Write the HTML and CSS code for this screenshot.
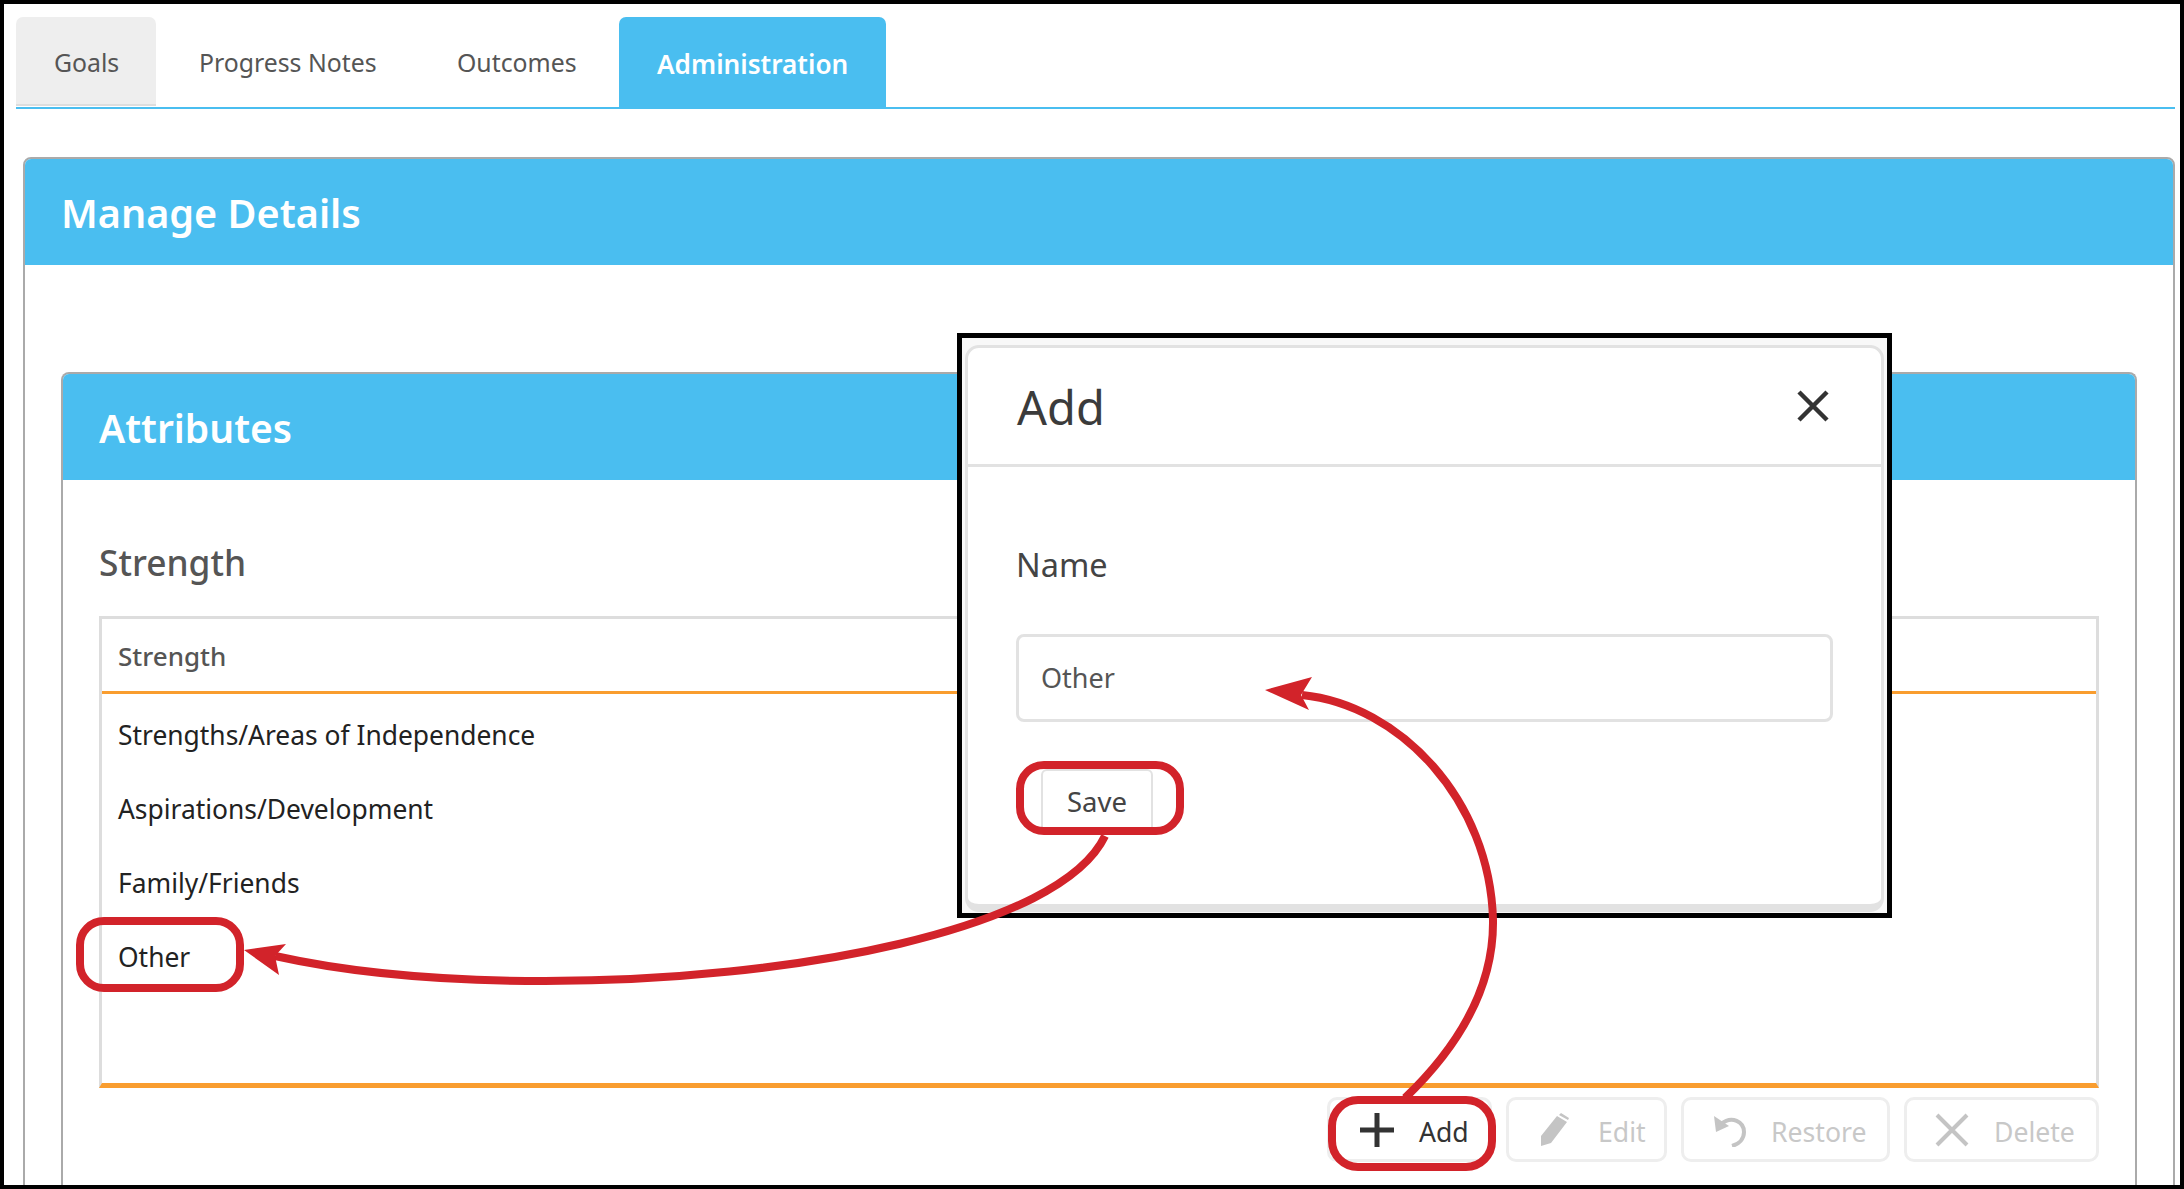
FILE: index.html
```html
<!DOCTYPE html>
<html lang="en">
<head>
    <meta charset="UTF-8">
    <title>Manage Details</title>
    <link rel="stylesheet" href="styles.css">
</head>
<body>
    <div class="frame">
        <nav class="tabs">
            <a class="tab tab-goals">Goals</a>
            <a class="tab tab-progress">Progress Notes</a>
            <a class="tab tab-outcomes">Outcomes</a>
            <a class="tab tab-admin">Administration</a>
        </nav>

        <section class="panel panel-outer">
            <h1 class="panel-title panel-title-main">Manage Details</h1>
            <div class="panel-body">
                <section class="panel panel-inner">
                    <h2 class="panel-title">Attributes</h2>
                    <div class="attr-body">
                        <h3 class="attr-heading">Strength</h3>
                        <div class="grid">
                            <div class="grid-head">Strength</div>
                            <ul class="grid-rows">
                                <li>Strengths/Areas of Independence</li>
                                <li>Aspirations/Development</li>
                                <li>Family/Friends</li>
                                <li>Other</li>
                            </ul>
                        </div>
                        <div class="toolbar">
                            <button class="tool tool-add">
                                <svg class="tool-icon" viewBox="0 0 34 34"><path d="M17 0v34M0 17h34" fill="none" stroke="#333" stroke-width="5"/></svg>
                                Add
                            </button>
                            <button class="tool tool-edit" disabled>
                                <svg class="tool-icon" viewBox="0 0 34 34"><path d="M2 33V23L18 3l10 6-16 21zM22 0l8 5-1 2-9-5z" fill="#c4c4c4"/></svg>
                                Edit
                            </button>
                            <button class="tool tool-restore" disabled>
                                <svg class="tool-icon" viewBox="0 0 34 34"><path d="M9 11C20 2 32 9 32 19c0 7-5 12-12 14" fill="none" stroke="#c4c4c4" stroke-width="4"/><path d="M2 3l2 16 13-6z" fill="#c4c4c4"/></svg>
                                Restore
                            </button>
                            <button class="tool tool-delete" disabled>
                                <svg class="tool-icon" viewBox="0 0 34 34"><path d="M2 2l30 30M32 2L2 32" fill="none" stroke="#c4c4c4" stroke-width="4"/></svg>
                                Delete
                            </button>
                        </div>
                    </div>
                </section>
            </div>
        </section>

        <div class="dialog-crop">
            <div class="dialog">
                <header class="dialog-head">
                    <h4 class="dialog-title">Add</h4>
                    <svg class="dialog-close" viewBox="0 0 32 32"><path d="M2 2l28 28M30 2L2 30" fill="none" stroke="#333" stroke-width="4.5"/></svg>
                </header>
                <div class="dialog-body">
                    <label class="field-label">Name</label>
                    <div class="field-input">Other</div>
                    <button class="save-btn">Save</button>
                </div>
            </div>
        </div>

        <!-- callouts drawn over the screenshot -->
        <svg class="callouts" viewBox="0 0 2184 1189">
            <g fill="none" stroke="#d2232a" stroke-width="8">
                <rect x="80" y="921" width="160" height="67" rx="24"/>
                <rect x="1020" y="765" width="160" height="66" rx="24"/>
                <rect x="1332" y="1100" width="160" height="67" rx="26"/>
                <path d="M275 956C360 975 460 981 545 981C790 981 1060 930 1105 836"/>
                <path d="M1302 695C1400 705 1490 800 1493 920C1494 990 1455 1050 1405 1098"/>
            </g>
            <path d="M244 950L286 944L275 956L279 975Z" fill="#d2232a"/>
            <path d="M1265 690L1312 677L1301 695L1309 710Z" fill="#d2232a"/>
        </svg>
    </div>
</body>
</html>
```

FILE: styles.css
```css
* { margin: 0; padding: 0; box-sizing: border-box; }

body {
    font-family: 'Noto Sans', 'Open Sans', sans-serif;
    background: #000;
    overflow: hidden;
}

.frame {
    position: relative;
    width: 2184px;
    height: 1189px;
    overflow: hidden;
    background: #fff;
    border: 4px solid #000;
    padding: 13px 5px 0 12px;
}

/* Tabs */
.tabs {
    display: flex;
    border-bottom: 2px solid #4abef0;
    height: 92px;
}

.tab {
    display: block;
    height: 90px;
    font-size: 24.8px;
    white-space: nowrap;
    color: #555;
    padding-top: 28px;
    border-radius: 7px 7px 0 0;
}

.tab-goals {
    width: 140px;
    padding-left: 38px;
    background: #eee;
    border-bottom: 2px solid #ddd;
    height: 89px;
}

.tab-progress { width: 260px; padding-left: 43px; }
.tab-outcomes { width: 203px; padding-left: 41px; }

.tab-admin {
    width: 267px;
    padding-left: 38px;
    padding-top: 29px;
    background: #4abef0;
    color: #fff;
    font-size: 26.2px;
    font-weight: 600;
}

/* Panels */
.panel {
    border: 2px solid #aaa;
    border-radius: 8px 8px 0 0;
}

.panel-outer {
    margin: 48px 0 0 7px;
    width: 2152px;
    height: 1100px;
}

.panel-title {
    background: #4abef0;
    color: #fff;
    font-weight: 600;
    font-size: 39px;
    height: 106px;
    padding: 27px 0 0 36px;
    line-height: 54px;
    border-radius: 6px 6px 0 0;
}

.panel-title-main { font-size: 39.6px; }

.panel-body { padding: 107px 36px 0 36px; }

.panel-inner {
    height: 900px;
    border-bottom: 0;
}

.attr-body { padding: 0 36px; }

.attr-heading {
    font-size: 35.3px;
    font-weight: 500;
    color: #555;
    padding-top: 57px;
    line-height: 50px;
    height: 136px;
}

/* Table */
.grid {
    height: 472px;
    border: solid #ddd;
    border-width: 3px 3px 0 3px;
    border-bottom: 5px solid #f99d2f;
}

.grid-head {
    height: 75px;
    padding: 19px 0 0 16px;
    font-size: 26px;
    font-weight: 500;
    color: #555;
    border-bottom: 3px solid #f99d2f;
}

.grid-rows {
    list-style: none;
    padding: 4px 0 0 16px;
}

.grid-rows li {
    height: 74px;
    line-height: 74px;
    font-size: 26.4px;
    color: #222;
}

/* Toolbar */
.toolbar {
    display: flex;
    justify-content: flex-end;
    gap: 14px;
    margin-top: 9px;
}

.tool {
    display: flex;
    align-items: center;
    height: 65px;
    background: #fff;
    border: 3px solid #eee;
    border-radius: 10px;
    font: inherit;
    font-size: 26.6px;
    color: #c8c8c8;
    padding: 4px 0 0 28px;
}

.tool-add { width: 165px; color: #333; padding-left: 30px; }
.tool-edit { width: 161px; padding-left: 30px; }
.tool-restore { width: 209px; }
.tool-delete { width: 195px; }

.tool-icon {
    width: 34px;
    height: 34px;
    margin: -4px 25px 0 0;
}

/* Dialog, as pasted over the page */
.dialog-crop {
    position: absolute;
    left: 953px;
    top: 329px;
    width: 935px;
    height: 585px;
    background: #f8f8f8;
    border: 5px solid #000;
    padding: 7px 3px 0 3px;
}

.dialog {
    height: 567px;
    background: #fff;
    border: 3px solid #e2e2e2;
    border-bottom-width: 8px;
    border-radius: 14px;
}

.dialog-head {
    display: flex;
    justify-content: space-between;
    align-items: center;
    height: 119px;
    border-bottom: 3px solid #e2e2e2;
    padding: 2px 52px 0 49px;
}

.dialog-title {
    font-size: 47px;
    font-weight: 400;
    color: #3b3b3b;
}

.dialog-close {
    width: 32px;
    height: 32px;
    margin-top: -3px;
}

.dialog-body { padding: 0 48px; }

.field-label {
    display: block;
    padding-top: 75px;
    font-size: 32.5px;
    line-height: 45px;
    color: #444;
}

.field-input {
    height: 88px;
    margin-top: 47px;
    border: 3px solid #e2e2e2;
    border-radius: 8px;
    padding: 22px 0 0 22px;
    font-size: 27px;
    color: #555;
}

.save-btn {
    display: block;
    width: 112px;
    height: 64px;
    margin: 47px 0 0 25px;
    background: #fff;
    border: 2px solid #e2e2e2;
    border-radius: 6px;
    font: inherit;
    font-size: 27.5px;
    color: #444;
}

.callouts {
    position: absolute;
    left: -4px;
    top: -4px;
    width: 2184px;
    height: 1189px;
}
```
